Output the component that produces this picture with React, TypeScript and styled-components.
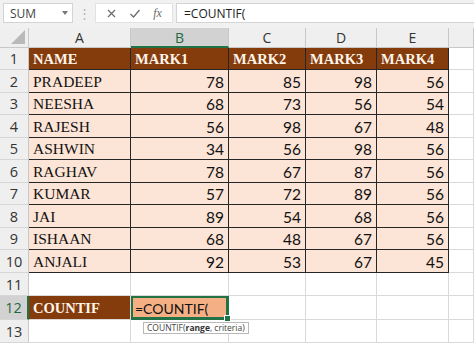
import React from "react";
import styled, { createGlobalStyle, css } from "styled-components";

const Global = createGlobalStyle`
  html, body { margin: 0; padding: 0; background: #ffffff; overflow: hidden; }
  #root { width: 474px; height: 343px; }
`;

const GREEN = "#217346";
const GRID = "#d9d9d9";
const DARK = "#262626";

const Frame = styled.div`
  width: 474px;
  height: 343px;
  overflow: hidden;
  display: flex;
  flex-direction: column;
  background: #ffffff;
  font-family: "Open Sans", "Noto Sans", sans-serif;
`;

const FormulaBar = styled.div`
  height: 28px;
  flex: none;
  display: flex;
  align-items: flex-start;
  padding: 3px 0 0 3px;
  box-sizing: border-box;
  background: #f1f1f1;
`;

const NameBox = styled.div`
  width: 70px;
  height: 20px;
  box-sizing: border-box;
  background: #ffffff;
  border: 1px solid #d4d4d4;
  display: flex;
  align-items: center;
  justify-content: space-between;
  padding: 0 4px 0 6px;
  font-size: 12px;
  color: #444;
`;

const Caret = styled.span`
  width: 0;
  height: 0;
  border-left: 3px solid transparent;
  border-right: 3px solid transparent;
  border-top: 4px solid #777;
`;

const Dots = styled.div`
  width: 22px;
  height: 20px;
  display: flex;
  align-items: center;
  justify-content: center;
  color: #b5b5b5;
  font-size: 13px;
`;

const ButtonGroup = styled.div`
  width: 78px;
  height: 20px;
  box-sizing: border-box;
  background: #ffffff;
  border: 1px solid #e2e2e2;
  display: flex;
  align-items: center;
  justify-content: space-around;
  padding: 0 4px;
  color: #6a6a6a;
`;

const Fx = styled.span`
  font-family: "Liberation Serif", serif;
  font-style: italic;
  font-size: 12px;
  color: #6a6a6a;
`;

const FormulaInput = styled.div`
  flex: 1;
  height: 20px;
  margin-left: 3px;
  box-sizing: border-box;
  background: #ffffff;
  border: 1px solid #d4d4d4;
  border-right: none;
  display: flex;
  align-items: center;
  padding-left: 7px;
  font-size: 12px;
  color: #222;
`;

const Sheet = styled.div`
  position: relative;
  flex: 1;
  display: grid;
  grid-template-columns: 29px 102px 98px 77px 71px 72px 1fr;
  grid-template-rows: 20px 22px 23px 22px 23px 22px 23px 22px 23px 22px 23px 23px 24px 23px;
`;

type Kind = "head" | "data" | "formula" | "label" | "empty";

const Cell = styled.div<{ $kind: Kind; $right?: boolean }>`
  position: relative;
  box-sizing: border-box;
  border-right: 1px solid ${GRID};
  border-bottom: 1px solid ${GRID};
  display: flex;
  align-items: center;
  padding: 1px 4px 0 4px;
  white-space: nowrap;
  overflow: visible;
  justify-content: ${(p) => (p.$right ? "flex-end" : "flex-start")};
  ${(p) =>
    p.$kind === "head" &&
    css`
      background: #843c0c;
      color: #fff4ea;
      font-family: "Liberation Serif", serif;
      font-weight: bold;
      font-size: 14.5px;
      border-color: ${DARK};
    `}
  ${(p) =>
    p.$kind === "label" &&
    css`
      background: #843c0c;
      color: #fff4ea;
      font-family: "Liberation Serif", serif;
      font-weight: bold;
      font-size: 14.5px;
    `}
  ${(p) =>
    p.$kind === "data" &&
    css`
      background: #fce4d6;
      color: #111;
      font-family: ${p.$right ? `"Lato", "Liberation Sans", sans-serif` : `"Liberation Serif", serif`};
      font-size: ${p.$right ? "15.5px" : "15.5px"};
      border-color: ${DARK};
    `}
  ${(p) =>
    p.$kind === "formula" &&
    css`
      background: #f4b084;
      color: #111;
      font-family: "Lato", "Liberation Sans", sans-serif;
      font-size: 14px;
      box-shadow: inset 0 0 0 2px ${GREEN};
      border-color: ${GREEN};
      &::after {
        content: "";
        position: absolute;
        right: -3px;
        bottom: -3px;
        width: 5px;
        height: 5px;
        background: ${GREEN};
        border: 1px solid #fff;
        z-index: 2;
      }
    `}
`;

const Corner = styled.div`
  position: relative;
  background: #efefef;
  border-right: 1px solid #c8c8c8;
  border-bottom: 1px solid #c8c8c8;
  box-sizing: border-box;
  &::after {
    content: "";
    position: absolute;
    right: 3px;
    bottom: 3px;
    width: 0;
    height: 0;
    border-left: 14px solid transparent;
    border-bottom: 14px solid #b9b9b9;
  }
`;

const ColHead = styled.div<{ $sel?: boolean }>`
  box-sizing: border-box;
  background: ${(p) => (p.$sel ? "#d2d2d2" : "#efefef")};
  border-right: 1px solid #c8c8c8;
  border-bottom: ${(p) => (p.$sel ? `2px solid ${GREEN}` : "1px solid #c8c8c8")};
  display: flex;
  align-items: center;
  justify-content: center;
  font-size: 14px;
  color: ${(p) => (p.$sel ? "#1e6b41" : "#333")};
`;

const RowHead = styled.div<{ $sel?: boolean }>`
  box-sizing: border-box;
  background: ${(p) => (p.$sel ? "#d2d2d2" : "#efefef")};
  border-right: ${(p) => (p.$sel ? `2px solid ${GREEN}` : "1px solid #c8c8c8")};
  border-bottom: 1px solid #d6d6d6;
  display: flex;
  align-items: center;
  justify-content: center;
  font-size: 14.5px;
  color: ${(p) => (p.$sel ? "#1e6b41" : "#333")};
`;

const Tooltip = styled.div`
  position: absolute;
  left: 143px;
  top: 294px;
  height: 12px;
  box-sizing: border-box;
  padding: 0 3px;
  background: #ffffff;
  border: 1px solid #b8b8b8;
  font-family: "Open Sans", "Noto Sans", sans-serif;
  font-size: 8.5px;
  line-height: 10px;
  color: #444;
  white-space: nowrap;
  z-index: 3;
  b { font-weight: bold; color: #333; }
`;

const XIcon = () => (
  <svg width="11" height="11" viewBox="0 0 11 11">
    <path d="M2 2 L9 9 M9 2 L2 9" stroke="#6a6a6a" strokeWidth="1.2" fill="none" />
  </svg>
);

const CheckIcon = () => (
  <svg width="12" height="11" viewBox="0 0 12 11">
    <path d="M1.5 6 L4.5 9 L10.5 2" stroke="#6a6a6a" strokeWidth="1.3" fill="none" />
  </svg>
);

const data: [string, number, number, number, number][] = [
  ["PRADEEP", 78, 85, 98, 56],
  ["NEESHA", 68, 73, 56, 54],
  ["RAJESH", 56, 98, 67, 48],
  ["ASHWIN", 34, 56, 98, 56],
  ["RAGHAV", 78, 67, 87, 56],
  ["KUMAR", 57, 72, 89, 56],
  ["JAI", 89, 54, 68, 56],
  ["ISHAAN", 68, 48, 67, 56],
  ["ANJALI", 92, 53, 67, 45],
];

const cols = ["A", "B", "C", "D", "E", ""];

export default function App() {
  return (
    <Frame>
      <Global />
      <FormulaBar>
        <NameBox>
          SUM
          <Caret />
        </NameBox>
        <Dots>⋮</Dots>
        <ButtonGroup>
          <XIcon />
          <CheckIcon />
          <Fx>fx</Fx>
        </ButtonGroup>
        <FormulaInput>=COUNTIF(</FormulaInput>
      </FormulaBar>
      <Sheet>
        <Corner />
        {cols.map((c, i) => (
          <ColHead key={i} $sel={c === "B"}>
            {c}
          </ColHead>
        ))}

        <RowHead>1</RowHead>
        {["NAME", "MARK1", "MARK2", "MARK3", "MARK4"].map((h) => (
          <Cell key={h} $kind="head">
            {h}
          </Cell>
        ))}
        <Cell $kind="empty" />

        {data.map((r, i) => (
          <React.Fragment key={r[0]}>
            <RowHead>{i + 2}</RowHead>
            <Cell $kind="data">{r[0]}</Cell>
            {r.slice(1).map((v, j) => (
              <Cell key={j} $kind="data" $right>
                {v}
              </Cell>
            ))}
            <Cell $kind="empty" />
          </React.Fragment>
        ))}

        <RowHead>11</RowHead>
        {cols.map((_, i) => (
          <Cell key={i} $kind="empty" />
        ))}

        <RowHead $sel>12</RowHead>
        <Cell $kind="label">COUNTIF</Cell>
        <Cell $kind="formula">=COUNTIF(</Cell>
        {[0, 1, 2, 3].map((i) => (
          <Cell key={i} $kind="empty" />
        ))}

        <RowHead>13</RowHead>
        {cols.map((_, i) => (
          <Cell key={i} $kind="empty" />
        ))}

        <Tooltip>
          COUNTIF(<b>range</b>, criteria)
        </Tooltip>
      </Sheet>
    </Frame>
  );
}
